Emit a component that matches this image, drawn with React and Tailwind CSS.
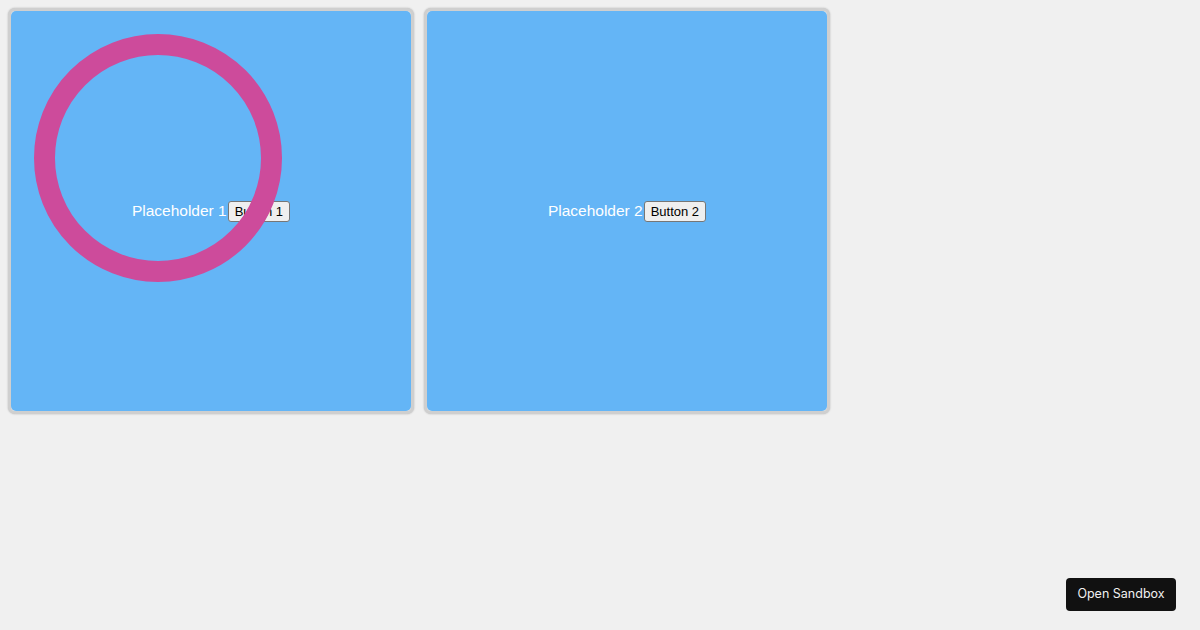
import React from "react";

function Card({ label, btn, children }) {
  return (
    <div className="relative w-[406px] h-[406px] rounded-[7px] border-[3px] border-[#cfcfcf] shadow-[0_0_2px_rgba(0,0,0,0.25)] bg-[#e6e6e6]">
      <div className="w-full h-full rounded-[5px] bg-[#64b5f6] flex items-center justify-center">
        <span className="text-white text-[15.5px] leading-[20px]">{label}</span>
        <button className="ml-[1px] px-[6px] h-[21px] text-[13px] leading-[15px] text-black bg-[#efefef] border border-[#767676] rounded-[3px]">
          {btn}
        </button>
      </div>
      {children}
    </div>
  );
}

export default function App() {
  return (
    <div
      className="relative w-[1200px] h-[630px] bg-[#f0f0f0] overflow-hidden"
      style={{ fontFamily: '"Liberation Sans", Arial, sans-serif' }}
    >
      <div className="flex gap-[10px] p-[8px]">
        <Card label="Placeholder 1" btn="Button 1">
          <svg
            className="absolute left-[23px] top-[23px]"
            width="248"
            height="248"
            viewBox="0 0 248 248"
          >
            <circle cx="124" cy="124" r="113.5" fill="none" stroke="#cd4b9b" strokeWidth="21" />
          </svg>
        </Card>
        <Card label="Placeholder 2" btn="Button 2" />
      </div>
      <button
        className="absolute right-[24px] bottom-[19px] w-[110px] h-[33px] rounded-[4px] bg-[#111111] text-[#f0f0f0] text-[12.5px]"
        style={{ fontFamily: 'Inter, "Liberation Sans", sans-serif' }}
      >
        Open Sandbox
      </button>
    </div>
  );
}
